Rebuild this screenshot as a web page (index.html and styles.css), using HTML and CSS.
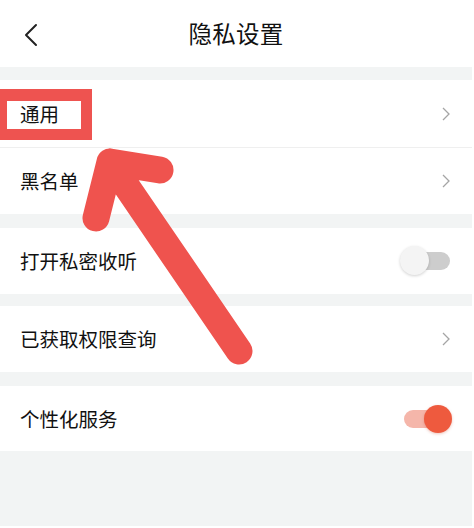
FILE: index.html
```html
<!DOCTYPE html>
<html lang="zh-CN">
<head>
  <meta charset="UTF-8">
  <title>隐私设置</title>
  <link rel="stylesheet" href="styles.css">
</head>
<body>
  <div class="page">
    <header class="topbar">
      <svg class="back-icon" width="14" height="24" viewBox="0 0 14 24">
        <path d="M12 2 L2 12 L12 22" fill="none" stroke="#222" stroke-width="2" stroke-linecap="round" stroke-linejoin="round"/>
      </svg>
      <h1 class="title">隐私设置</h1>
    </header>

    <div class="gap gap-first"></div>

    <section class="group">
      <div class="row row-tall">
        <span class="label">通用</span>
        <svg class="chevron" width="8" height="14" viewBox="0 0 8 14"><path d="M1 1 L7 7 L1 13" fill="none" stroke="#a5a5a5" stroke-width="1.3"/></svg>
      </div>
      <div class="divider"></div>
      <div class="row">
        <span class="label">黑名单</span>
        <svg class="chevron" width="8" height="14" viewBox="0 0 8 14"><path d="M1 1 L7 7 L1 13" fill="none" stroke="#a5a5a5" stroke-width="1.3"/></svg>
      </div>
    </section>

    <div class="gap"></div>

    <section class="group">
      <div class="row">
        <span class="label">打开私密收听</span>
        <span class="switch"><span class="knob"></span></span>
      </div>
    </section>

    <div class="gap gap-small"></div>

    <section class="group">
      <div class="row">
        <span class="label">已获取权限查询</span>
        <svg class="chevron" width="8" height="14" viewBox="0 0 8 14"><path d="M1 1 L7 7 L1 13" fill="none" stroke="#a5a5a5" stroke-width="1.3"/></svg>
      </div>
    </section>

    <div class="gap"></div>

    <section class="group">
      <div class="row row-last">
        <span class="label">个性化服务</span>
        <span class="switch on"><span class="knob"></span></span>
      </div>
    </section>

    <div class="footer-fill"></div>

    <!-- 标注 -->
    <div class="mark-box"></div>
    <svg class="mark-arrow" width="474" height="528" viewBox="0 0 474 528">
      <path d="M160 170 L110 162 L96 218 M110 162 L239 351" fill="none" stroke="#ef534e" stroke-width="27" stroke-linecap="round" stroke-linejoin="round"/>
    </svg>
  </div>
</body>
</html>
```

FILE: styles.css
```css
* {
  margin: 0;
  padding: 0;
  box-sizing: border-box;
}

body {
  background-color: #fff;
  font-family: "Noto Sans CJK SC", "Noto Sans", sans-serif;
  color: #111;
}

.page {
  position: relative;
  width: 474px;
  height: 528px;
  padding: 0 2px 2px 0;
  display: flex;
  flex-direction: column;
  overflow: hidden;
}

.topbar {
  height: 67px;
  display: flex;
  align-items: center;
  justify-content: center;
  position: relative;
  background-color: #fff;
}

.back-icon {
  position: absolute;
  left: 24px;
  top: 23px;
}

.title {
  font-size: 23.5px;
  font-weight: 400;
  letter-spacing: 0.2px;
  margin-top: -1px;
}

.gap {
  height: 14px;
  background-color: #f2f4f4;
}

.gap-first {
  height: 13px;
}

.gap-small {
  height: 12px;
}

.group {
  background-color: #fff;
}

.row {
  height: 66px;
  display: flex;
  align-items: center;
  justify-content: space-between;
  padding: 0 20px 0 20px;
}

.row-tall {
  height: 67px;
}

.row-last {
  height: 65px;
}

.label {
  font-size: 19.5px;
  line-height: 1;
}

.chevron {
  margin-right: 2px;
}

.divider {
  height: 1px;
  background-color: #efefef;
}

.switch {
  position: relative;
  width: 48px;
  height: 18px;
  border-radius: 9px;
  background-color: #cdcdcd;
  margin-right: 2px;
}

.switch .knob {
  position: absolute;
  left: -2px;
  top: -6px;
  width: 29px;
  height: 29px;
  border-radius: 50%;
  background-color: #f4f4f4;
  box-shadow: 0 1px 3px rgba(0, 0, 0, 0.18);
}

.switch.on {
  width: 46px;
  background-color: #f5b6aa;
}

.switch.on .knob {
  left: auto;
  right: -2px;
  top: -5px;
  width: 28px;
  height: 28px;
  background-color: #ee5a3e;
  box-shadow: 0 1px 3px rgba(200, 60, 30, 0.3);
}

.footer-fill {
  flex: 1;
  background-color: #f2f4f4;
}

.mark-box {
  position: absolute;
  left: 0;
  top: 89px;
  width: 92px;
  height: 51px;
  border-style: solid;
  border-color: #ee5350;
  border-width: 12px 11px 11px 7px;
}

.mark-arrow {
  position: absolute;
  left: 0;
  top: 0;
  pointer-events: none;
}
```
